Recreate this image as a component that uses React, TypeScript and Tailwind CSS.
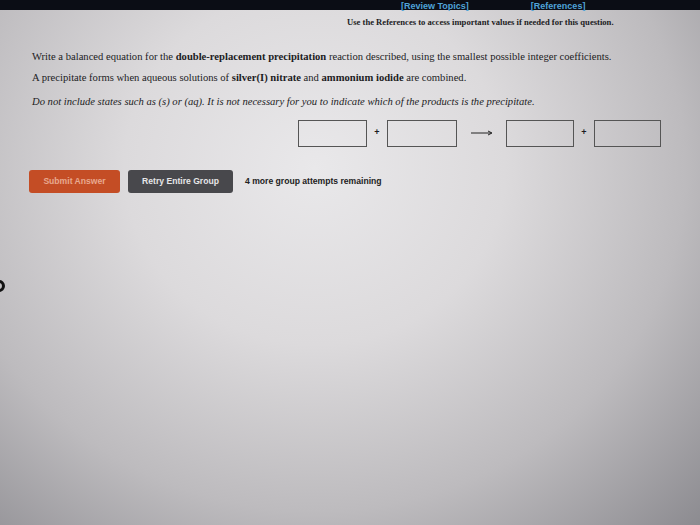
export default function App() {
  const box = 'h-[27px] border border-[#555] bg-transparent';
  return (
    <div className="relative w-[700px] h-[525px] overflow-hidden bg-[radial-gradient(ellipse_at_45%_32%,#e9e8ea_0%,#dcdadc_35%,#bdbbbe_68%,#8c8b90_100%)] font-['Liberation_Serif',serif] text-[#1c1c1e]">
      <div className="h-[10px] bg-[#0b0d15] flex items-end text-[9px] font-bold font-['Liberation_Sans',sans-serif] text-[#4fa3d8] leading-none">
        <span className="ml-[401px] -mb-[1px]">[Review Topics]</span>
        <span className="ml-[62px] -mb-[1px]">[References]</span>
      </div>
      <div className="mt-[8px] ml-[347px] text-[8.6px] font-bold leading-none">
        Use the References to access important values if needed for this question.
      </div>
      <div className="ml-[32px] mt-[24px] flex flex-col gap-[10px] text-[10.6px] leading-[11px]">
        <p>
          Write a balanced equation for the <b>double-replacement precipitation</b> reaction described, using the smallest possible integer coefficients.
        </p>
        <p>
          A precipitate forms when aqueous solutions of <b>silver(I) nitrate</b> and <b>ammonium iodide</b> are combined.
        </p>
        <p className="italic mt-[3px]">
          Do not include states such as (s) or (aq). It is not necessary for you to indicate which of the products is the precipitate.
        </p>
      </div>
      <div className="mt-[13px] ml-[298px] flex items-center">
        <div className={`${box} w-[69px]`} />
        <span className="w-[20px] text-center text-[9px] font-bold font-['Liberation_Sans',sans-serif]">+</span>
        <div className={`${box} w-[70px]`} />
        <span className="w-[49px] flex justify-center">
          <svg width="22" height="6" viewBox="0 0 22 6">
            <path d="M0 3H20M17 1L21 3L17 5" stroke="#222" strokeWidth="1" fill="none" />
          </svg>
        </span>
        <div className={`${box} w-[68px]`} />
        <span className="w-[20px] text-center text-[9px] font-bold font-['Liberation_Sans',sans-serif]">+</span>
        <div className={`${box} w-[67px]`} />
      </div>
      <div className="mt-[23px] ml-[29px] flex items-center gap-[8px] font-['Liberation_Sans',sans-serif] text-[8.6px] font-bold">
        <button className="w-[91px] h-[23px] rounded-[3px] bg-[#c44d25] text-[#e8a98f]">Submit Answer</button>
        <button className="w-[105px] h-[23px] rounded-[3px] bg-[#48484c] text-[#e6e6e8]">Retry Entire Group</button>
        <span className="ml-[4px] text-[#222]">4 more group attempts remaining</span>
      </div>
      <div className="absolute left-[-7px] top-[280px] w-[12px] h-[12px] rounded-full border-[3px] border-[#111]" />
    </div>
  );
}
